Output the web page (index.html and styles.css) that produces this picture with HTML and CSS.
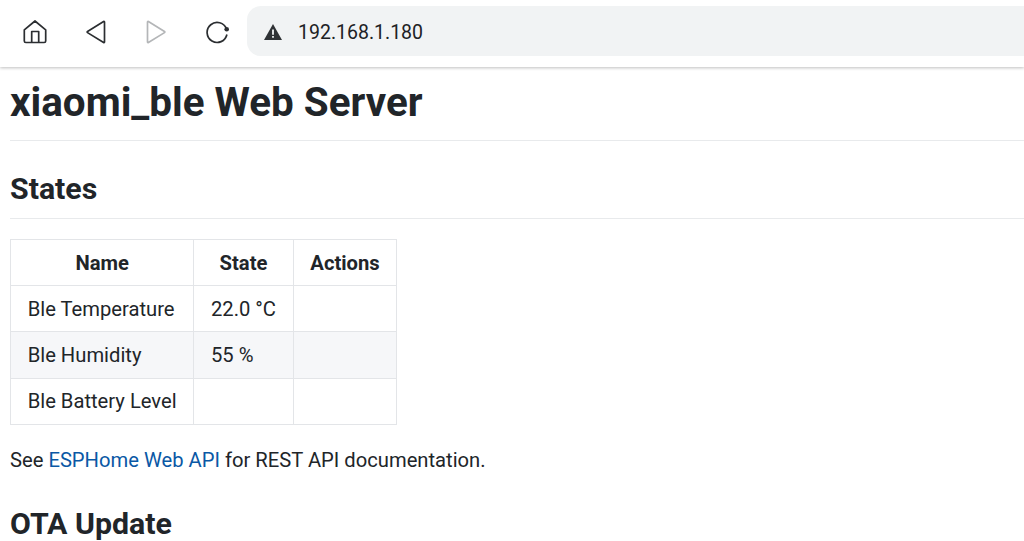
FILE: index.html
```html
<!DOCTYPE html>
<html lang="en">
<head>
<meta charset="utf-8">
<title>xiaomi_ble Web Server</title>
<link rel="stylesheet" href="styles.css">
</head>
<body>
<header class="toolbar">
  <svg class="icon icon-home" viewBox="0 0 24 24"><path d="M1.300 21V9.800L12 1l10.700 8.800V21a1.500 1.500 0 0 1-1.500 1.500H2.800A1.500 1.500 0 0 1 1.300 21z M8.700 22.500v-11h7v11"/></svg>
  <svg class="icon icon-back" viewBox="0 0 20 24"><path d="M18.500 2v20a.6.6 0 0 1-.9.5L1.500 12.600a.7.7 0 0 1 0-1.200L17.600 1.500a.6.6 0 0 1 .9.5z"/></svg>
  <svg class="icon icon-forward" viewBox="0 0 20 24"><path d="M1.500 2v20a.6.6 0 0 0 .9.5L18.500 12.600a.7.7 0 0 0 0-1.200L2.400 1.500a.6.6 0 0 0-.9.5z"/></svg>
  <svg class="icon icon-reload" viewBox="0 0 24 24"><path d="M20.900 14.500A10 10 0 1 1 20.500 9"/><circle class="dot" cx="20.700" cy="9.200" r="2.300"/></svg>
  <div class="address">
    <svg class="warn" viewBox="0 0 18 16"><path class="warn-shape" d="M9 0l9 16H0z"/><path class="warn-mark" d="M8.100 5.500h1.800v5.300H8.100zM8.100 11.900h1.800v1.800H8.100z"/></svg>
    <span class="url">192.168.1.180</span>
  </div>
</header>
<main class="page">
  <h1>xiaomi_ble Web Server</h1>
  <h2>States</h2>
  <table>
    <thead>
      <tr><th>Name</th><th>State</th><th>Actions</th></tr>
    </thead>
    <tbody>
      <tr><td>Ble Temperature</td><td>22.0 °C</td><td></td></tr>
      <tr class="striped"><td>Ble Humidity</td><td>55 %</td><td></td></tr>
      <tr><td>Ble Battery Level</td><td></td><td></td></tr>
    </tbody>
  </table>
  <p>See <a href="#">ESPHome Web API</a> for REST API documentation.</p>
  <h2 class="ota">OTA Update</h2>
</main>
</body>
</html>
```
FILE: styles.css
```css
html, body {
  margin: 0;
  height: 541px;
  overflow: hidden;
  background: #fff;
}
body {
  font-family: Roboto, "Liberation Sans", sans-serif;
  color: #212529;
  font-size: 20.2px;
}
.toolbar {
  height: 67px;
  box-sizing: border-box;
  display: flex;
  align-items: flex-start;
  padding: 6px 0 0 23px;
  background: #fff;
  box-shadow: 0 1px 3px rgba(0, 0, 0, .25);
}
.icon {
  flex: none;
  fill: none;
  stroke: #2b2e31;
  stroke-width: 1.7;
  stroke-linejoin: round;
  margin-top: 14px;
}
.icon-home { width: 24px; height: 24px; }
.icon-back { width: 20px; height: 24px; margin-left: 39px; }
.icon-forward { width: 20px; height: 24px; margin-left: 40px; stroke: #b4b6b8; }
.icon-reload { width: 24px; height: 24px; margin-left: 40px; }
.dot { fill: #2b2e31; stroke: none; }
.address {
  flex: 1;
  height: 50px;
  margin-left: 17px;
  display: flex;
  align-items: center;
  padding-left: 17px;
  background: #f1f3f4;
  border-radius: 14px 0 0 14px;
}
.warn { width: 18px; height: 16px; flex: none; margin-top: 1px; }
.warn-shape { fill: #2f3235; }
.warn-mark { fill: #f1f3f4; }
.url {
  margin-left: 16px;
  font-size: 19.5px;
  color: #202124;
  position: relative;
  top: 1px;
}
.page { padding: 0 0 0 10px; }
h1 {
  margin: 0;
  padding: 9px 0 11px;
  font-size: 40.4px;
  line-height: 53px;
  font-weight: 700;
  border-bottom: 1px solid #e8eaec;
}
h2 {
  margin: 0;
  font-size: 30.3px;
  line-height: 40px;
  font-weight: 700;
}
h1 + h2 {
  margin-top: 28px;
  padding-bottom: 9px;
  border-bottom: 1px solid #e8eaec;
}
table {
  margin-top: 20px;
  border-collapse: collapse;
  line-height: 24px;
}
th, td {
  border: 1px solid #e3e5e8;
  padding: 10.600px 16.670px;
  height: 24px;
  text-align: left;
  font-weight: 400;
}
th { font-weight: 700; text-align: center; }
.striped td { background: #f6f7f9; }
p { margin: 23px 0 0; line-height: 24px; }
.ota { margin-top: 32px; }
a { color: #0a58a5; text-decoration: none; }
```
